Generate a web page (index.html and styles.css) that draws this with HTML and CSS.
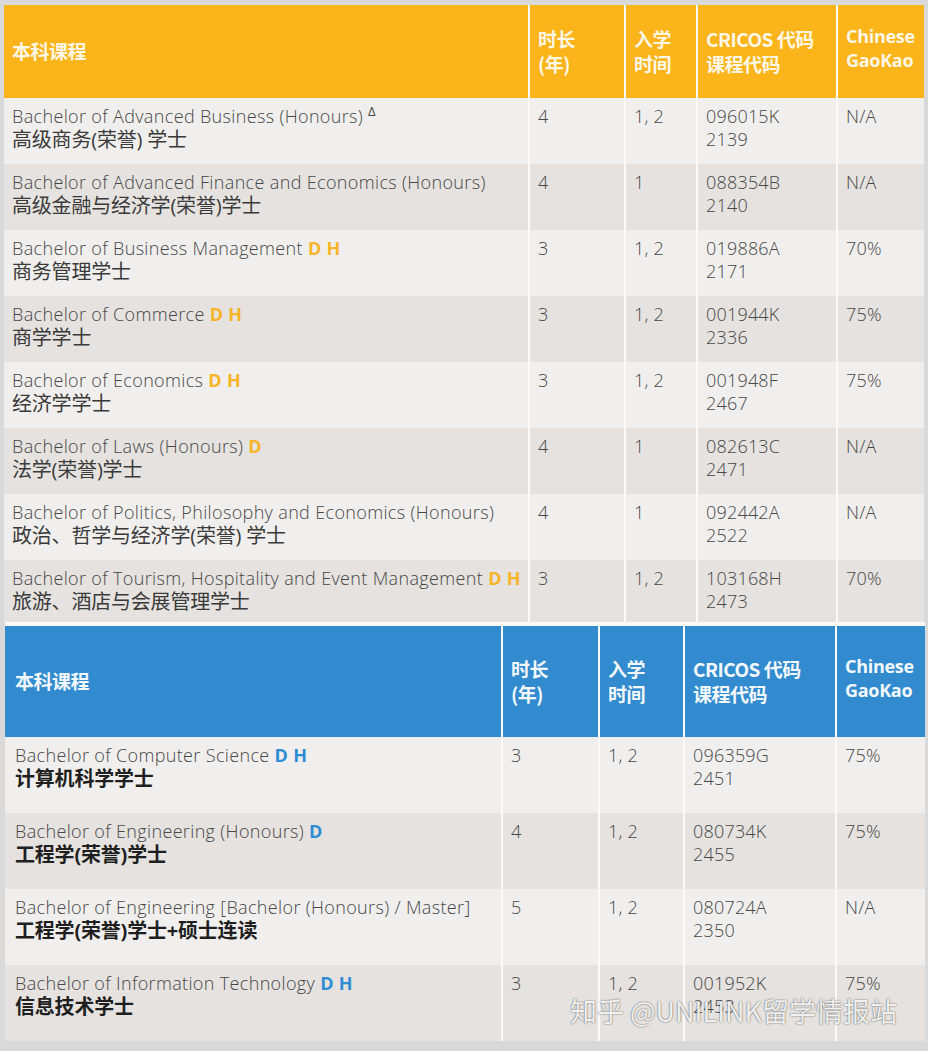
FILE: index.html
```html
<!DOCTYPE html>
<html lang="zh-CN">
<head>
<meta charset="utf-8">
<title>本科课程</title>
<link rel="stylesheet" href="styles.css">
</head>
<body>
<div class="page">
  <table class="prog prog-orange">
    <thead>
      <tr>
        <th class="c-name"><span class="th-cn">本科课程</span></th>
        <th class="c-dur"><span class="th-cn">时长<br>(年)</span></th>
        <th class="c-int"><span class="th-cn">入学<br>时间</span></th>
        <th class="c-code"><span class="th-cn">CRICOS 代码<br>课程代码</span></th>
        <th class="c-gk"><span class="th-en">Chinese<br>GaoKao</span></th>
      </tr>
    </thead>
    <tbody>
      <tr class="light">
        <td><div class="en">Bachelor of Advanced Business (Honours) <sup class="delta">Δ</sup></div><div class="cn">高级商务(荣誉) 学士</div></td>
        <td>4</td><td>1, 2</td><td>096015K<br>2139</td><td>N/A</td>
      </tr>
      <tr class="dark">
        <td><div class="en">Bachelor of Advanced Finance and Economics (Honours)</div><div class="cn">高级金融与经济学(荣誉)学士</div></td>
        <td>4</td><td>1</td><td>088354B<br>2140</td><td>N/A</td>
      </tr>
      <tr class="light">
        <td><div class="en">Bachelor of Business Management <b class="mark">D H</b></div><div class="cn">商务管理学士</div></td>
        <td>3</td><td>1, 2</td><td>019886A<br>2171</td><td>70%</td>
      </tr>
      <tr class="dark">
        <td><div class="en">Bachelor of Commerce <b class="mark">D H</b></div><div class="cn">商学学士</div></td>
        <td>3</td><td>1, 2</td><td>001944K<br>2336</td><td>75%</td>
      </tr>
      <tr class="light">
        <td><div class="en">Bachelor of Economics <b class="mark">D H</b></div><div class="cn">经济学学士</div></td>
        <td>3</td><td>1, 2</td><td>001948F<br>2467</td><td>75%</td>
      </tr>
      <tr class="dark">
        <td><div class="en">Bachelor of Laws (Honours) <b class="mark">D</b></div><div class="cn">法学(荣誉)学士</div></td>
        <td>4</td><td>1</td><td>082613C<br>2471</td><td>N/A</td>
      </tr>
      <tr class="light">
        <td><div class="en">Bachelor of Politics, Philosophy and Economics (Honours)</div><div class="cn">政治、哲学与经济学(荣誉) 学士</div></td>
        <td>4</td><td>1</td><td>092442A<br>2522</td><td>N/A</td>
      </tr>
      <tr class="dark last">
        <td><div class="en">Bachelor of Tourism, Hospitality and Event Management <b class="mark">D H</b></div><div class="cn">旅游、酒店与会展管理学士</div></td>
        <td>3</td><td>1, 2</td><td>103168H<br>2473</td><td>70%</td>
      </tr>
    </tbody>
  </table>

  <table class="prog prog-blue">
    <thead>
      <tr>
        <th class="c-name"><span class="th-cn">本科课程</span></th>
        <th class="c-dur"><span class="th-cn">时长<br>(年)</span></th>
        <th class="c-int"><span class="th-cn">入学<br>时间</span></th>
        <th class="c-code"><span class="th-cn">CRICOS 代码<br>课程代码</span></th>
        <th class="c-gk"><span class="th-en">Chinese<br>GaoKao</span></th>
      </tr>
    </thead>
    <tbody>
      <tr class="light">
        <td><div class="en">Bachelor of Computer Science <b class="mark">D H</b></div><div class="cn">计算机科学学士</div></td>
        <td>3</td><td>1, 2</td><td>096359G<br>2451</td><td>75%</td>
      </tr>
      <tr class="dark">
        <td><div class="en">Bachelor of Engineering (Honours) <b class="mark">D</b></div><div class="cn">工程学(荣誉)学士</div></td>
        <td>4</td><td>1, 2</td><td>080734K<br>2455</td><td>75%</td>
      </tr>
      <tr class="light">
        <td><div class="en">Bachelor of Engineering [Bachelor (Honours) / Master]</div><div class="cn">工程学(荣誉)学士+硕士连读</div></td>
        <td>5</td><td>1, 2</td><td>080724A<br>2350</td><td>N/A</td>
      </tr>
      <tr class="dark">
        <td><div class="en">Bachelor of Information Technology <b class="mark">D H</b></div><div class="cn">信息技术学士</div></td>
        <td>3</td><td>1, 2</td><td>001952K<br>2453</td><td>75%</td>
      </tr>
    </tbody>
  </table>

  <div class="watermark">知乎 @UNILINK留学情报站</div>
</div>
</body>
</html>
```

FILE: styles.css
```css
html, body {
  margin: 0;
  padding: 0;
}
body {
  background: #d9d9d9;
  width: 928px;
  height: 1051px;
  overflow: hidden;
}
.page {
  position: relative;
  padding: 5px 4px 0 4px;
  box-sizing: border-box;
  width: 928px;
  height: 1051px;
  font-family: "Open Sans", "Noto Sans CJK SC", sans-serif;
}
.prog {
  border-collapse: separate;
  border-spacing: 0;
  table-layout: fixed;
  width: 920px;
}
.prog th, .prog td {
  box-sizing: border-box;
  text-align: left;
  padding: 0 0 0 8px;
}
.prog th + th, .prog td + td {
  border-left: 2px solid #fbfaf8;
}
.prog th {
  vertical-align: middle;
  color: #fff7e6;
  font-weight: 700;
  font-size: 18px;
  line-height: 24px;
}
.prog th.c-gk {
  padding-bottom: 8px;
}
.prog td {
  vertical-align: top;
  color: #474747;
  font-size: 18px;
  font-weight: 300;
  line-height: 23px;
  padding-top: 7px;
  letter-spacing: 0.2px;
}
.th-cn {
  font-family: "Noto Sans CJK SC", sans-serif;
  font-size: 19px;
  letter-spacing: -0.5px;
}
.th-en {
  font-family: "Open Sans", sans-serif;
  font-size: 18px;
  letter-spacing: -0.3px;
}
.en {
  white-space: nowrap;
  letter-spacing: 0.35px;
}
.cn {
  font-family: "Open Sans", "Noto Sans CJK SC", sans-serif;
  font-size: 20px;
  color: #3a3a3a;
  font-weight: 400;
  letter-spacing: -0.2px;
  white-space: nowrap;
}
.delta {
  font-size: 13px;
  vertical-align: 7px;
  line-height: 0;
  font-weight: 400;
}
.mark {
  font-weight: 700;
  letter-spacing: 0.3px;
}

/* orange table */
.prog-orange thead tr { height: 93px; }
.prog-orange tbody tr { height: 66px; }
.prog-orange tbody tr.last { height: 62px; }
.prog-orange thead th { background: #fbb41a; }
.prog-orange .mark { color: #f6b426; }
.prog-orange .c-name { width: 524px; }
.prog-orange .c-dur { width: 96px; }
.prog-orange .c-int { width: 72px; }
.prog-orange .c-code { width: 140px; }
.prog-orange .c-gk { width: 88px; }

/* blue table */
.prog-blue {
  margin-left: 1px;
  border-top: 4px solid #fbfaf8;
}
.prog-blue thead tr { height: 111px; }
.prog-blue tbody tr { height: 76px; }
.prog-blue thead th { background: #318bce; color: #f2f8fd; }
.prog-blue .mark { color: #2f8dd3; }
.prog-blue .cn { font-weight: 700; color: #1f1f1f; }
.prog-blue .c-name { width: 496px; }
.prog-blue .c-dur { width: 97px; }
.prog-blue .c-int { width: 85px; }
.prog-blue .c-code { width: 152px; }
.prog-blue .c-gk { width: 90px; }
.prog-blue th.c-name { padding-left: 10px; }
.prog-blue td:first-child { padding-left: 10px; }

tr.light td { background: #f1efed; }
tr.dark td { background: #e5e2df; }

.watermark {
  position: absolute;
  left: 570px;
  top: 993px;
  font-family: "Noto Sans CJK SC", sans-serif;
  font-size: 27px;
  line-height: 36px;
  color: rgba(255, 255, 255, 0.92);
  text-shadow: 0 0 2px rgba(0, 0, 0, 0.45), 0 0 1px rgba(0, 0, 0, 0.4);
  white-space: nowrap;
}
```
